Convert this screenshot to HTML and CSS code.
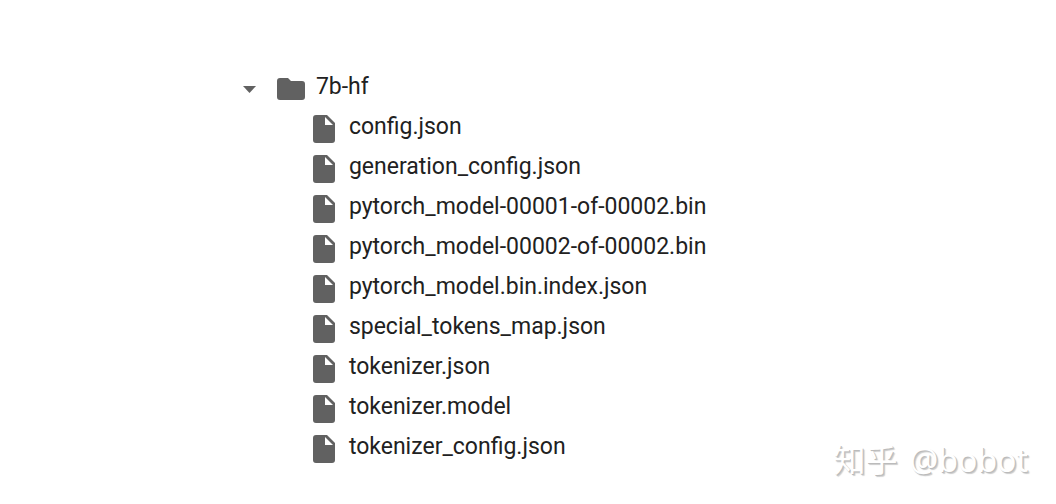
FILE: index.html
```html
<!DOCTYPE html>
<html lang="en">

<head>
    <meta charset="UTF-8">
    <meta name="viewport" content="width=device-width, initial-scale=1.0">
    <title>7b-hf</title>
    <link rel="stylesheet" href="styles.css">
</head>

<body>
    <!-- shared icons -->
    <svg class="sprite" aria-hidden="true">
        <symbol id="file" viewBox="0 0 22 28">
            <path fill-rule="evenodd" d="M3 0h11l8 8v17a3 3 0 0 1-3 3H3a3 3 0 0 1-3-3V3a3 3 0 0 1 3-3zM12 2v8h8z" />
        </symbol>
        <symbol id="folder" viewBox="0 0 28 22">
            <path d="M3 0h8l3 3h11a3 3 0 0 1 3 3v13a3 3 0 0 1-3 3H3a3 3 0 0 1-3-3V3a3 3 0 0 1 3-3z" />
        </symbol>
    </svg>

    <main class="file-tree">
        <div class="row folder">
            <button type="button" class="toggle" aria-label="Collapse 7b-hf" aria-expanded="true" aria-controls="files">
                <svg class="arrow" viewBox="0 0 14 7"><path d="M0 0h13L6.500 7z" /></svg>
            </button>
            <svg class="folder-icon"><use href="#folder" /></svg>
            <span class="name">7b-hf</span>
        </div>
        <ul class="files" id="files">
            <li class="row"><svg class="file-icon"><use href="#file" /></svg><span class="name">config.json</span></li>
            <li class="row"><svg class="file-icon"><use href="#file" /></svg><span class="name">generation_config.json</span></li>
            <li class="row"><svg class="file-icon"><use href="#file" /></svg><span class="name">pytorch_model-00001-of-00002.bin</span></li>
            <li class="row"><svg class="file-icon"><use href="#file" /></svg><span class="name">pytorch_model-00002-of-00002.bin</span></li>
            <li class="row"><svg class="file-icon"><use href="#file" /></svg><span class="name">pytorch_model.bin.index.json</span></li>
            <li class="row"><svg class="file-icon"><use href="#file" /></svg><span class="name">special_tokens_map.json</span></li>
            <li class="row"><svg class="file-icon"><use href="#file" /></svg><span class="name">tokenizer.json</span></li>
            <li class="row"><svg class="file-icon"><use href="#file" /></svg><span class="name">tokenizer.model</span></li>
            <li class="row"><svg class="file-icon"><use href="#file" /></svg><span class="name">tokenizer_config.json</span></li>
        </ul>
    </main>

    <div class="watermark"><span lang="zh-CN">知乎</span> <span>@bobot</span></div>

    <script>
        const toggle = document.querySelector(".toggle");
        toggle.addEventListener("click", () => {
            const files = document.getElementById("files");
            files.hidden = !files.hidden;
            toggle.setAttribute("aria-expanded", String(!files.hidden));
        });
    </script>
</body>

</html>
```

FILE: styles.css
```css
body {
    position: relative;
    box-sizing: border-box;
    min-height: 100vh;
    margin: 0;
    background-color: #fff;
    color: #212121;
    font-family: Roboto, sans-serif;
    font-size: 23px;
}

.sprite {
    position: absolute;
    width: 0;
    height: 0;
}

.file-tree {
    padding: 69px 0 24px 23%;
}

.row {
    display: flex;
    align-items: center;
    height: 40px;
}

.name {
    line-height: 32px;
    padding-bottom: 4px;
}

.toggle {
    display: flex;
    margin: 0 20px 0 0;
    padding: 0;
    border: none;
    background: none;
    cursor: pointer;
}

.arrow {
    width: 14px;
    height: 7px;
}

.folder-icon {
    width: 28px;
    height: 22px;
    margin-right: 11px;
}

.file-icon {
    width: 22px;
    height: 28px;
    margin-right: 14px;
}

.arrow,
.folder-icon,
.file-icon {
    flex: none;
    fill: #616161;
}

.files {
    margin: 0;
    padding: 0 0 0 70px;
    list-style: none;
}

.files[hidden] {
    display: none;
}

.watermark {
    position: absolute;
    right: 28px;
    bottom: 20px;
    display: flex;
    align-items: baseline;
    gap: 12px;
    color: #fff;
    font-family: "Noto Sans", "Noto Sans CJK SC", sans-serif;
    font-size: 32px;
    line-height: 48px;
    text-shadow: 1px 1px 0 #bbb, 2px 2px 1px #ccc;
}
```
